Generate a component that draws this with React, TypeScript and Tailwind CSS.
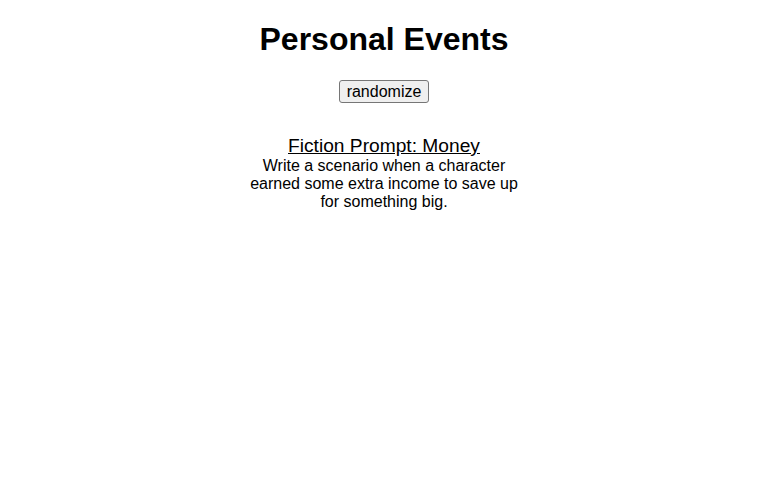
import React from "react";

export default function App() {
  return (
    <div className="min-h-[480px] bg-white text-black text-center font-['Liberation_Sans',Arial,sans-serif]">
      <h1 className="pt-[21px] text-[32px] leading-[37px] font-bold">Personal Events</h1>
      <div className="mt-[22px] flex justify-center">
        <button className="h-[23px] px-[7px] text-[16px] leading-[19px] bg-[#efefef] border border-[#767676] rounded-[3px] text-black">
          randomize
        </button>
      </div>
      <div className="mt-[32px] flex justify-center">
        <div className="w-[280px]">
          <div className="text-[19.2px] leading-[22px] underline">Fiction Prompt: Money</div>
          <p className="text-[16px] leading-[18px]">
            Write a scenario when a character earned some extra income to save up for something big.
          </p>
        </div>
      </div>
    </div>
  );
}
